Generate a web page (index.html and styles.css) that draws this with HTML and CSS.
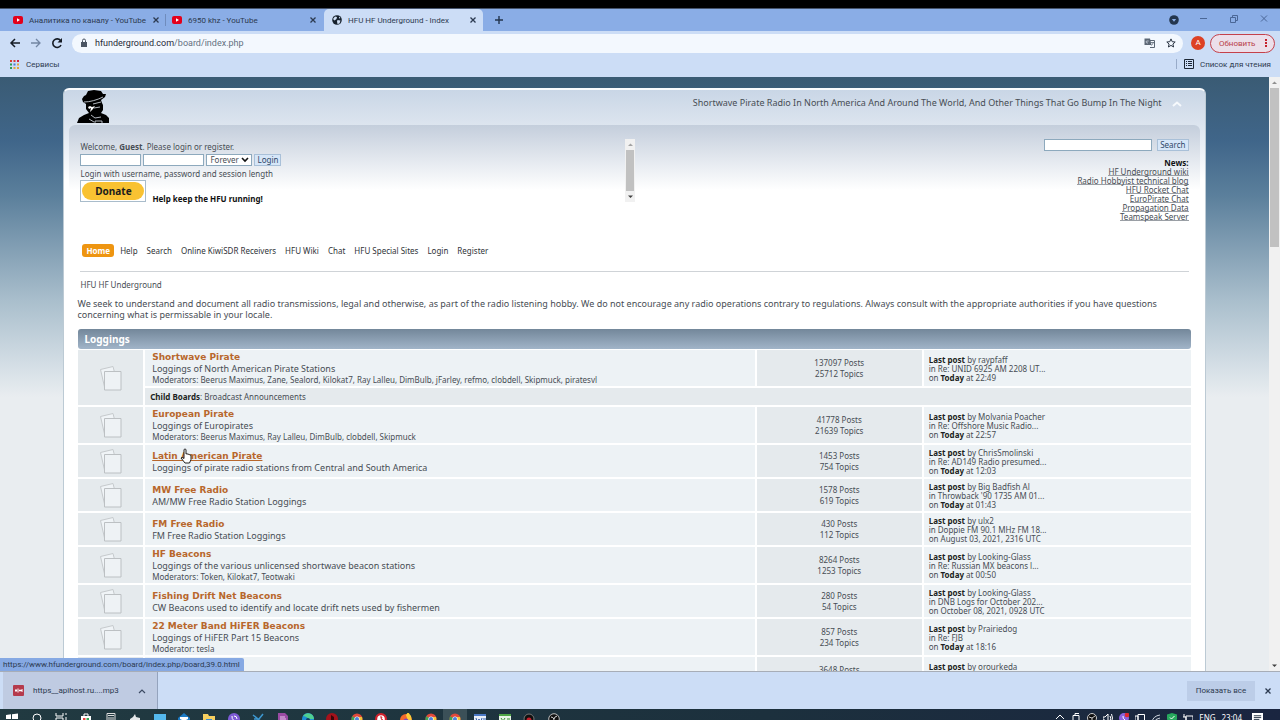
FILE: index.html
```html
<!DOCTYPE html>
<html lang="ru">
<head>
    <meta charset="UTF-8">
    <meta name="viewport" content="width=device-width, initial-scale=1.0">
    <title>HFU HF Underground - Index</title>
    <link rel="stylesheet" href="styles.css">
</head>
<body>

    <!-- shared icons -->
    <svg class="sprite" aria-hidden="true">
        <symbol id="pages" viewBox="0 0 24 26">
            <path d="M1.500 4.500L14 1.500L19 21L6 24Z" fill="#f0f4f7" stroke="#c6cacd"/>
            <path d="M5.500 6.500h16.500v18.500h-16.500z" fill="#eef2f5" stroke="#bcc0c3"/>
        </symbol>
        <symbol id="close" viewBox="0 0 8 8">
            <path d="M1.500 1.500l5 5M6.500 1.500l-5 5" stroke="currentColor" stroke-width="1.300" fill="none"/>
        </symbol>
        <symbol id="youtube" viewBox="0 0 10 8">
            <rect width="10" height="8" rx="2" fill="#e3001b"/>
            <path d="M4 2.300v3.400l3-1.700z" fill="#fff"/>
        </symbol>
        <symbol id="chrome" viewBox="0 0 12 12">
            <circle cx="6" cy="6" r="5.500" fill="#e0493a"/>
            <path d="M1.200 3.300A5.500 5.500 0 0 0 5.500 11.500L7.500 7.500L6 6z" fill="#43a355"/>
            <path d="M11 4A5.500 5.500 0 0 1 5.500 11.500L8 6L7 4z" fill="#f3c43b"/>
            <circle cx="6" cy="6" r="2.600" fill="#fff"/>
            <circle cx="6" cy="6" r="2" fill="#4c80dc"/>
        </symbol>
    </svg>

    <header class="browser">
        <div class="tabs">
            <div class="tab">
                <svg class="fav" viewBox="0 0 10 8"><use href="#youtube"/></svg>
                <span class="tab-title">Аналитика по каналу - YouTube</span>
                <button class="plain" aria-label="Закрыть"><svg class="x"><use href="#close"/></svg></button>
            </div>
            <div class="tab divided">
                <svg class="fav" viewBox="0 0 10 8"><use href="#youtube"/></svg>
                <span class="tab-title">6950 khz - YouTube</span>
                <button class="plain" aria-label="Закрыть"><svg class="x"><use href="#close"/></svg></button>
            </div>
            <div class="tab active">
                <svg class="fav" viewBox="0 0 10 10">
                    <circle cx="5" cy="5" r="4.800" fill="#15202c"/>
                    <path d="M1 4l2-2.500 2 .5-.5 2-2 1.500zM5.500 5l3 .5-1 3-2 .5-.5-2.500zM7 1.500l1.500 1.500-1.500.5z" fill="#cfdff5"/>
                </svg>
                <span class="tab-title">HFU HF Underground - Index</span>
                <button class="plain" aria-label="Закрыть"><svg class="x"><use href="#close"/></svg></button>
            </div>
            <button class="plain new-tab" aria-label="Новая вкладка">
                <svg width="10" height="10" viewBox="0 0 10 10"><path d="M5 1v8M1 5h8" stroke="#23344d" stroke-width="1.400"/></svg>
            </button>
            <div class="window-buttons">
                <button class="plain" aria-label="Вкладки"><svg width="10" height="10" viewBox="0 0 10 10"><circle cx="5" cy="5" r="4.800" fill="#24364e"/><path d="M2.800 4h4.400L5 6.800z" fill="#8aade5"/></svg></button>
                <button class="plain" aria-label="Свернуть"><svg width="10" height="10" viewBox="0 0 10 10"><path d="M1 3.500h7" stroke="#4a6797"/></svg></button>
                <button class="plain" aria-label="Развернуть"><svg width="10" height="10" viewBox="0 0 10 10"><path d="M1.500 2.500h5v5h-5zM3.500 2.500v-2h5v5h-2" stroke="#4a6797" fill="none"/></svg></button>
                <button class="plain" aria-label="Закрыть окно"><svg width="10" height="10" viewBox="0 0 10 10"><path d="M2 .5l6 6M8 .5l-6 6" stroke="#4a6797"/></svg></button>
            </div>
        </div>

        <div class="toolbar">
            <button class="plain" aria-label="Назад"><svg width="12" height="12" viewBox="0 0 12 12"><path d="M11 6H2M6 2L2 6l4 4" stroke="#151b24" stroke-width="1.500" fill="none"/></svg></button>
            <button class="plain" aria-label="Вперёд"><svg width="12" height="12" viewBox="0 0 12 12"><path d="M1 6h9M6 2l4 4-4 4" stroke="#7386a3" stroke-width="1.300" fill="none"/></svg></button>
            <button class="plain" aria-label="Обновить страницу"><svg width="12" height="12" viewBox="0 0 12 12"><path d="M10 8A4.300 4.300 0 1 1 9.500 3.500" stroke="#151b24" stroke-width="1.600" fill="none"/><path d="M11 1v4.500H6.500z" fill="#151b24"/></svg></button>
            <div class="address">
                <svg width="8" height="10" viewBox="0 0 8 10"><rect x="1" y="4" width="6" height="5" fill="#4b5563"/><path d="M2.500 4V2.500a1.500 1.500 0 0 1 3 0V4" stroke="#4b5563" fill="none"/></svg>
                <div class="url">hfunderground.com<span>/board/index.php</span></div>
                <svg width="11" height="10" viewBox="0 0 11 10"><path d="M.5.500h5.500l1.500 6.500h-7z" fill="#5b6674"/><path d="M5.500 2.500h5v7H6" stroke="#5b6674" fill="none"/><path d="M4.700 3H3a1 1 0 1 0 1 1.500" stroke="#dfe8f2" stroke-width=".7" fill="none"/><path d="M7 4.500h3M9.500 4.500L7.500 7.500" stroke="#5b6674" stroke-width=".8"/></svg>
                <svg width="10" height="10" viewBox="0 0 10 10"><path d="M5 .9l1.200 2.800 3 .3-2.300 2 .7 3L5 7.400 2.400 9l.7-3-2.300-2 3-.3z" stroke="#2c3644" fill="none"/></svg>
            </div>
            <span class="avatar">А</span>
            <button class="update">Обновить <span class="dots"><i></i><i></i><i></i></span></button>
        </div>

        <div class="bookmarks">
            <svg width="9" height="9" viewBox="0 0 9 9">
                <path d="M0 0h2v2H0zM3.500 0h2v2h-2z" fill="#d33b35"/><path d="M7 0h2v2H7z" fill="#c24"/>
                <path d="M0 3.500h2v2H0zM0 7h2v2H0z" fill="#2f9a57"/><path d="M3.500 3.500h2v2h-2z" fill="#4478d8"/>
                <path d="M7 3.500h2v2H7zM3.500 7h2v2h-2zM7 7h2v2H7z" fill="#dfa63c"/>
            </svg>
            <a href="#">Сервисы</a>
            <a href="#" class="reading-list">
                <svg width="10" height="10" viewBox="0 0 10 10"><path d="M.5.500h9v9h-9z" stroke="#1c2634" fill="none"/><path d="M2 2.500h1M4 2.500h4M2 4.500h1M4 4.500h4M2 6.500h1M4 6.500h4" stroke="#1c2634"/></svg>
                Список для чтения
            </a>
        </div>
    </header>

    <div class="viewport">
        <div class="page">
            <div class="wrapper">
                <div class="banner">
                    <svg class="logo" viewBox="0 0 33 33" aria-label="HFU">
                        <path d="M0 33L2 28L7 25L12 23L9 19L9 14L6 12L5 9L7 6L9 5L11 1L17 0L24 1L26 4L29 4L28 7L24 10L25 13L26 15L26 20L24 23L29 25L32 28L32 33Z" fill="#000"/>
                        <path d="M7 12c6 0 13-2 19-5M16 14l4-1M20 13l4-1M17 18l6-1M14 25l4 3M18 28l6-1M18 33v-2h7v2M12 29l5 3" stroke="#dfe6ef" stroke-width=".8" fill="none"/>
                        <path d="M11 17l1 2 2-1-1 4 3-3 2-3-3 1-2-1z" fill="#fff"/>
                    </svg>
                    <div class="slogan">Shortwave Pirate Radio In North America And Around The World, And Other Things That Go Bump In The Night</div>
                    <button class="plain" aria-label="Collapse"><svg width="12" height="8" viewBox="0 0 12 8"><path d="M2 6l4-3.500L10 6" stroke="#f6f9fc" stroke-width="2" fill="none"/></svg></button>
                </div>

                <div class="content">
                    <div class="upper">
                        <div class="left">
                            <div class="user">
                                <p>Welcome, <b>Guest</b>. Please <a href="#">login</a> or <a href="#">register</a>.</p>
                                <form class="login">
                                    <input type="text" aria-label="Username">
                                    <input type="password" aria-label="Password">
                                    <span class="length">
                                        <select aria-label="Session length"><option>Forever</option></select>
                                        <svg viewBox="0 0 8 6"><path d="M1 1l3 3 3-3" stroke="#111" stroke-width="1.600" fill="none"/></svg>
                                    </span>
                                    <button type="button" class="submit">Login</button>
                                </form>
                                <p>Login with username, password and session length</p>
                                <div class="donate">
                                    <button type="button"><span>Donate</span></button>
                                    <b>Help keep the HFU running!</b>
                                </div>
                            </div>
                            <div class="scrollbar small">
                                <svg viewBox="0 0 10 10"><path d="M3 6.500h5L5.500 4z" fill="#a3a3a3"/></svg>
                                <div class="thumb"></div>
                                <svg viewBox="0 0 10 10"><path d="M3 4h5L5.500 6.500z" fill="#404040"/></svg>
                            </div>
                        </div>
                        <div class="right">
                            <form class="search">
                                <input type="text" aria-label="Search">
                                <button type="button" class="submit">Search</button>
                            </form>
                            <div class="news">
                                <b>News:</b>
                                <a href="#">HF Underground wiki</a>
                                <a href="#">Radio Hobbyist technical blog</a>
                                <a href="#">HFU Rocket Chat</a>
                                <a href="#">EuroPirate Chat</a>
                                <a href="#">Propagation Data</a>
                                <a href="#">Teamspeak Server</a>
                            </div>
                        </div>
                    </div>

                    <nav class="menu">
                        <a href="#" class="current">Home</a>
                        <a href="#">Help</a>
                        <a href="#">Search</a>
                        <a href="#">Online KiwiSDR Receivers</a>
                        <a href="#">HFU Wiki</a>
                        <a href="#">Chat</a>
                        <a href="#">HFU Special Sites</a>
                        <a href="#">Login</a>
                        <a href="#">Register</a>
                    </nav>

                    <div class="crumbs"><a href="#">HFU HF Underground</a></div>

                    <p class="intro">We seek to understand and document all radio transmissions, legal and otherwise, as part of the radio listening hobby. We do not encourage any radio operations contrary to regulations. Always consult with the appropriate authorities if you have questions concerning what is permissable in your locale.</p>

                    <h3 class="category">Loggings</h3>
                    <table class="boards">
                        <colgroup><col class="c-icon"><col class="c-info"><col class="c-stats"><col class="c-last"></colgroup>
                        <tbody>
                            <tr class="tall">
                                <td class="icon" rowspan="2"><svg><use href="#pages"/></svg></td>
                                <td class="info"><a href="#">Shortwave Pirate</a><p>Loggings of North American Pirate Stations</p><p class="mods">Moderators: Beerus Maximus, Zane, Sealord, Kilokat7, Ray Lalleu, DimBulb, jFarley, refmo, clobdell, Skipmuck, piratesvl</p></td>
                                <td class="stats">137097 Posts<br>25712 Topics</td>
                                <td class="last"><b>Last post</b> by raypfaff<br>in Re: UNID 6925 AM 2208 UT...<br>on <b>Today</b> at 22:49</td>
                            </tr>
                            <tr>
                                <td class="children" colspan="3"><b>Child Boards</b>: <a href="#">Broadcast Announcements</a></td>
                            </tr>
                            <tr class="tall">
                                <td class="icon"><svg><use href="#pages"/></svg></td>
                                <td class="info"><a href="#">European Pirate</a><p>Loggings of Europirates</p><p class="mods">Moderators: Beerus Maximus, Ray Lalleu, DimBulb, clobdell, Skipmuck</p></td>
                                <td class="stats">41778 Posts<br>21639 Topics</td>
                                <td class="last"><b>Last post</b> by Molvania Poacher<br>in Re: Offshore Music Radio...<br>on <b>Today</b> at 22:57</td>
                            </tr>
                            <tr>
                                <td class="icon"><svg><use href="#pages"/></svg></td>
                                <td class="info">
                                    <a href="#" class="hovered">Latin American Pirate
                                        <svg class="cursor" viewBox="0 0 12 16"><path d="M4 9V2q0-1 1-1t1 1v4q1-.8 2 .3 1-.5 1.500.5 1.500-.3 1.500 1.200v3.500L9.500 15H5L1 10q.5-1.500 3 .5z" fill="#fff" stroke="#222"/></svg>
                                    </a>
                                    <p>Loggings of pirate radio stations from Central and South America</p>
                                </td>
                                <td class="stats">1453 Posts<br>754 Topics</td>
                                <td class="last"><b>Last post</b> by ChrisSmolinski<br>in Re: AD149 Radio presumed...<br>on <b>Today</b> at 12:03</td>
                            </tr>
                            <tr>
                                <td class="icon"><svg><use href="#pages"/></svg></td>
                                <td class="info"><a href="#">MW Free Radio</a><p>AM/MW Free Radio Station Loggings</p></td>
                                <td class="stats">1578 Posts<br>619 Topics</td>
                                <td class="last"><b>Last post</b> by Big Badfish Al<br>in Throwback '90 1735 AM 01...<br>on <b>Today</b> at 01:43</td>
                            </tr>
                            <tr>
                                <td class="icon"><svg><use href="#pages"/></svg></td>
                                <td class="info"><a href="#">FM Free Radio</a><p>FM Free Radio Station Loggings</p></td>
                                <td class="stats">430 Posts<br>112 Topics</td>
                                <td class="last"><b>Last post</b> by ulx2<br>in Doppie FM 90.1 MHz FM 18...<br>on August 03, 2021, 2316 UTC</td>
                            </tr>
                            <tr class="tall">
                                <td class="icon"><svg><use href="#pages"/></svg></td>
                                <td class="info"><a href="#">HF Beacons</a><p>Loggings of the various unlicensed shortwave beacon stations</p><p class="mods">Moderators: Token, Kilokat7, Teotwaki</p></td>
                                <td class="stats">8264 Posts<br>1253 Topics</td>
                                <td class="last"><b>Last post</b> by Looking-Glass<br>in Re: Russian MX beacons l...<br>on <b>Today</b> at 00:50</td>
                            </tr>
                            <tr>
                                <td class="icon"><svg><use href="#pages"/></svg></td>
                                <td class="info"><a href="#">Fishing Drift Net Beacons</a><p>CW Beacons used to identify and locate drift nets used by fishermen</p></td>
                                <td class="stats">280 Posts<br>54 Topics</td>
                                <td class="last"><b>Last post</b> by Looking-Glass<br>in DNB Logs for October 202...<br>on October 08, 2021, 0928 UTC</td>
                            </tr>
                            <tr class="tall">
                                <td class="icon"><svg><use href="#pages"/></svg></td>
                                <td class="info"><a href="#">22 Meter Band HiFER Beacons</a><p>Loggings of HiFER Part 15 Beacons</p><p class="mods">Moderator: tesla</p></td>
                                <td class="stats">857 Posts<br>234 Topics</td>
                                <td class="last"><b>Last post</b> by Prairiedog<br>in Re: FJB<br>on <b>Today</b> at 18:16</td>
                            </tr>
                            <tr class="tall">
                                <td class="icon"></td>
                                <td class="info"></td>
                                <td class="stats">3648 Posts<br>&nbsp;</td>
                                <td class="last"><b>Last post</b> by orourkeda<br>&nbsp;<br>&nbsp;</td>
                            </tr>
                        </tbody>
                    </table>
                </div>
            </div>
        </div>
        <div class="scrollbar">
            <svg viewBox="0 0 10 10"><path d="M3 6.500h5L5.500 4z" fill="#909090"/></svg>
            <div class="thumb"></div>
            <svg viewBox="0 0 10 10"><path d="M3 4h5L5.500 6.500z" fill="#404040"/></svg>
        </div>
        <div class="status">https://www.hfunderground.com/board/index.php/board,39.0.html</div>
    </div>

    <div class="downloads">
        <button class="file">
            <svg width="11" height="11" viewBox="0 0 11 11"><rect width="11" height="11" rx="1" fill="#b53a4c"/><path d="M2 5.500h2M3 4v3M5 3.500v4M7 4.500v2M9 4v3M6 5.500h3" stroke="#fff"/></svg>
            <span>https__apihost.ru....mp3</span>
            <svg width="8" height="8" viewBox="0 0 8 8"><path d="M1 6l3-3 3 3" stroke="#3c4a63" stroke-width="1.200" fill="none"/></svg>
        </button>
        <button class="show-all">Показать все</button>
        <button class="plain" aria-label="Закрыть"><svg class="x"><use href="#close"/></svg></button>
    </div>

    <footer class="taskbar">
        <div class="apps">
            <svg viewBox="0 0 12 12"><path d="M0 2l5-.7V6H0zM6 1.200L12 .4V6H6zM0 7h5v5H0zM6 7h6v5H6z" fill="#fff"/></svg>
            <svg viewBox="0 0 12 12"><circle cx="6" cy="5" r="4" stroke="#fff" fill="none"/></svg>
            <svg viewBox="0 0 12 12"><path d="M1 0v3h7V0M1 12V5h7v7M11 0v2M11 4v8" stroke="#fff" fill="none"/></svg>
            <svg viewBox="0 0 12 12"><path d="M4 3V1h4v2" stroke="#fff" fill="none"/><path d="M1 3h10v9H1z" fill="#fff"/><path d="M3 5h2.500v2.500H3z" fill="#e44"/><path d="M6.500 5H9v2.500H6.500z" fill="#3a5"/></svg>
            <svg viewBox="0 0 12 12"><path d="M2 .5h8V12H2z" stroke="#ddd" fill="none"/><path d="M3 2.500h6M3 5h6M3 7h6" stroke="#ddd"/></svg>
            <svg viewBox="0 0 12 12"><path d="M1 12V6l3-2 2-3 1 3 4 1v7z" fill="#e6e8ea"/></svg>
            <svg viewBox="0 0 12 12"><path d="M0 1l12 0v11H0z" fill="#54b9ee"/></svg>
            <svg viewBox="0 0 12 12"><path d="M0 5l6-5 6 5v7H0z" fill="#1b7ac4"/><path d="M2 4h8v2L6 8 2 6z" fill="#fff"/></svg>
            <svg viewBox="0 0 12 12"><path d="M0 1h5l1 2h6v9H0z" fill="#f5cf60"/><path d="M3 6h6v2H3z" fill="#3b8bd0"/></svg>
            <svg viewBox="0 0 12 12"><circle cx="6" cy="6" r="6" fill="#7d5bd6"/><path d="M4 3q-1 2 3 6l1.500-1.500M6 3q3 0 3 3" stroke="#fff" fill="none"/></svg>
            <svg viewBox="0 0 12 12"><path d="M1 2l10 8M11 1L3 11M2 6h5" stroke="#3d97cf" stroke-width="1.500"/></svg>
            <svg viewBox="0 0 12 12"><path d="M1 0h7l3 3v9H1z" fill="#9b4ba4"/><path d="M3 4h5M3 6h6" stroke="#e8c8ee"/></svg>
            <svg viewBox="0 0 12 12"><circle cx="6" cy="6" r="6" fill="#1d8fd6"/><path d="M1 3a6 6 0 0 1 11 3H6q0-2-5-3z" fill="#50cf8f"/><circle cx="6" cy="7" r="2" fill="#123d66"/></svg>
            <svg viewBox="0 0 12 12"><circle cx="6" cy="6" r="6" fill="#a5121b"/><path d="M5 2l3 2v8H5z" fill="#3c060a"/></svg>
            <svg viewBox="0 0 12 12"><use href="#chrome"/></svg>
            <svg viewBox="0 0 12 12"><circle cx="6" cy="6" r="6" fill="#d2232e"/><circle cx="6" cy="6" r="3.800" fill="#fff"/><path d="M5 4h2l-1 2 2 1-3 2" stroke="#d2232e" fill="none"/></svg>
            <svg viewBox="0 0 12 12"><circle cx="6" cy="7" r="6" fill="#f3682c"/><path d="M6 2L8-1l3 4 1 6-4-1z" fill="#fbcb3a"/><circle cx="6" cy="8" r="2.500" fill="#7b46c2"/></svg>
            <svg viewBox="0 0 12 12"><use href="#chrome"/></svg>
            <svg class="running" viewBox="0 0 12 12"><use href="#chrome"/></svg>
            <svg viewBox="0 0 12 12"><path d="M0 1h12v11H0z" fill="#e8eef8"/><path d="M0 1h12v2H0z" fill="#4a78c4"/><path d="M2 5l1.500 5L5 6l1.500 4L8 5M9 6h3" stroke="#2f5cab" fill="none"/></svg>
            <svg viewBox="0 0 12 12"><path d="M0 1h12v11H0z" fill="#e8f4e6"/><path d="M0 1h12v2H0z" fill="#4da545"/><path d="M2 5l4 6M6 5l-4 6M8 6h3" stroke="#35902e"/></svg>
            <svg viewBox="0 0 12 12"><circle cx="6" cy="6" r="5" fill="#101010" stroke="#777"/><circle cx="6" cy="7" r="2.500" fill="#c51d2a"/></svg>
            <svg viewBox="0 0 12 12"><circle cx="6" cy="6" r="5.300" fill="#111" stroke="#bbb"/><path d="M3 4q2 0 3 2 0-2 3-3M6 6q0 2-2 4" stroke="#ddd" fill="none"/></svg>
        </div>
        <div class="tray">
            <svg viewBox="0 0 10 10"><path d="M1 6l4-4 4 4" stroke="#fff" fill="none"/></svg>
            <svg viewBox="0 0 10 10"><path d="M2 2.500h6V10H2zM4 2V.500h4" stroke="#fff" fill="none"/></svg>
            <svg viewBox="0 0 10 10"><circle cx="5" cy="5" r="4.500" fill="#111" stroke="#ccc"/><path d="M2 4l3 1 3-2M5 5v4" stroke="#ccc"/></svg>
            <svg viewBox="0 0 10 10"><path d="M0 4h2l3-3v9L2 7H0zM7 3q1.500 2 0 5M8.500 1q2 4 0 8" stroke="#fff" fill="none"/></svg>
            <svg viewBox="0 0 10 10"><circle cx="5" cy="5" r="5" fill="#8a63dd"/><path d="M4 3q-1 2 3 5" stroke="#fff" fill="none"/><circle cx="8" cy="2" r="2.300" fill="#e0282e"/></svg>
            <svg viewBox="0 0 10 10"><path d="M3 1.500h6.500V9H3zM0 3h3v7H0z" stroke="#fff" fill="none"/></svg>
            <svg viewBox="0 0 10 10"><path d="M1 9Q2 3 9 2M3 9q1-3 6-4M6 9q1-1 3-2" stroke="#cfd6de" fill="none"/></svg>
            <svg viewBox="0 0 10 10"><path d="M5 0l5 1.500v5L5 10 0 6.500v-5z" fill="#27a85d"/><path d="M3 4.500l1.500 1.500L7.500 3" stroke="#fff" fill="none"/></svg>
            <svg viewBox="0 0 10 10"><path d="M1 1v3M3 3h7v5H3zM0 4h3v5" stroke="#fff" fill="none"/></svg>
            <span class="lang">ENG</span>
            <span class="clock">23:04</span>
            <svg class="notes" viewBox="0 0 12 12"><path d="M0 0h12v12H0z" fill="#fff"/><path d="M2 3h8M2 5h8M2 7h6" stroke="#1b2b3c"/></svg>
        </div>
    </footer>

</body>
</html>
```
FILE: styles.css
```css
* {
    box-sizing: border-box;
}
body {
    margin: 0;
    height: 100vh;
    display: flex;
    flex-direction: column;
    overflow: hidden;
    background: #000;
    font-family: "Noto Sans", "DejaVu Sans", sans-serif;
    font-size: 8px;
    color: #474d54;
}
p, h3 {
    margin: 0;
}
a {
    color: inherit;
    text-decoration: none;
}
button, input, select {
    font: inherit;
    color: inherit;
    margin: 0;
    padding: 0;
}
svg {
    display: block;
    flex: none;
}
.sprite {
    position: absolute;
    width: 0;
    height: 0;
}
.plain {
    display: flex;
    border: none;
    background: none;
}

/* browser window */
.browser, .downloads, .status {
    font-family: Roboto, "Noto Sans", sans-serif;
    color: #2c3a50;
}
.browser {
    margin-top: 8px;
    border-top: 1px solid #45536b;
    background: #ccddf6;
    flex: none;
}
.tabs {
    display: flex;
    align-items: center;
    height: 22px;
    background: #8aade6;
}
.tab {
    display: flex;
    align-items: center;
    gap: 6px;
    width: 159px;
    height: 100%;
    padding: 0 7px 0 13px;
}
.tab:first-child {
    width: 165px;
}
.tab.divided {
    padding-left: 7px;
    background: linear-gradient(#6f8cbd, #6f8cbd) no-repeat 0 5px / 1px 12px;
}
.tab.active {
    padding: 0 6px 0 8px;
    border-radius: 5px 5px 0 0;
    background: #ccddf6;
}
.tab-title {
    flex: 1;
    white-space: nowrap;
}
.fav {
    width: 10px;
    height: 10px;
}
.x {
    width: 8px;
    height: 8px;
}
.new-tab {
    margin-left: 11px;
}
.window-buttons {
    display: flex;
    gap: 20px;
    margin-left: auto;
    margin-right: 11px;
}
.toolbar {
    display: flex;
    align-items: center;
    gap: 9px;
    height: 24px;
    padding: 0 5px 0 9px;
}
.address {
    display: flex;
    align-items: center;
    flex: 1;
    gap: 11px;
    height: 19px;
    padding: 0 7px 0 8px;
    border-radius: 10px;
    background: #f3f8fe;
}
.url {
    flex: 1;
    margin-left: -4px;
    font-size: 9px;
    color: #1f2937;
}
.url span {
    color: #64707e;
}
.avatar {
    width: 14px;
    height: 14px;
    border-radius: 7px;
    background: #dd4124;
    color: #fff;
    text-align: center;
    line-height: 14px;
    margin-left: -1px;
}
.update {
    display: flex;
    align-items: center;
    justify-content: space-between;
    width: 65px;
    height: 19px;
    padding: 0 7px 0 8px;
    margin-left: -4px;
    border: 1px solid #c5414b;
    border-radius: 10px;
    background: #ecdfea;
    color: #b93d48;
}
.dots {
    display: grid;
    gap: 1px;
}
.dots i {
    width: 2px;
    height: 2px;
    background: #c5222e;
}
.bookmarks {
    display: flex;
    align-items: center;
    gap: 7px;
    height: 22px;
    padding: 0 9px 4px 10px;
}
.reading-list {
    display: flex;
    align-items: center;
    gap: 6px;
    margin-left: auto;
    padding-left: 7px;
    border-left: 1px solid #98abc9;
}

/* forum page */
.viewport {
    position: relative;
    display: flex;
    flex: 1;
    min-height: 0;
    overflow: hidden;
    background: #e9edf0;
}
.page {
    flex: 1;
    padding-top: 11px;
    background: linear-gradient(#3a5b74 0, #40668a 65px, #5c809c 120px, #a9becc 223px, #d5dfe6 290px, #e9edf0 320px);
}
.wrapper {
    width: 90%;
    margin: 0 auto;
    border-top: 2px solid #fbfcfe;
    border-left: 1px solid #bccad4;
    border-right: 1px solid #bccad4;
    border-radius: 6px 6px 0 0;
    padding: 0 5px;
    background: linear-gradient(#c9d6e6, #dde5ef 36px, #fff 90px);
}
.banner {
    display: flex;
    height: 35px;
    padding: 0 17px 0 8px;
}
.logo {
    width: 33px;
    height: 33px;
}
.slogan {
    flex: 1;
    padding: 6px 9px 0 0;
    font-size: 9px;
    line-height: 14px;
    text-align: right;
}
.banner .plain {
    margin-top: 10px;
    height: 8px;
}
.content {
    padding: 14px 11px 0;
    border-radius: 6px 6px 0 0;
    background: linear-gradient(#c4cedc, #fff 65px);
}
.upper {
    display: grid;
    grid-template-columns: 1fr 1fr;
    height: 105px;
}
.left {
    display: flex;
    justify-content: space-between;
    align-items: flex-start;
}
.user {
    padding-top: 1px;
}
.user p {
    line-height: 13px;
}
.login, .search {
    display: flex;
    gap: 2px;
}
.login {
    margin: 1px 0;
}
.login input {
    width: 61px;
}
input, select {
    height: 12px;
    border: 1px solid #8da9bd;
    background: #fff;
}
.length {
    position: relative;
    display: block;
    height: 12px;
}
.length svg {
    position: absolute;
    right: 3px;
    top: 3px;
    width: 8px;
    height: 6px;
}
select {
    display: block;
    width: 46px;
    padding-left: 3px;
    appearance: none;
    line-height: 10px;
}
.submit {
    height: 12px;
    padding: 0 2px;
    border: 1px solid #a9c0d8;
    background: #d6e6f8;
    color: #2f4868;
    line-height: 10px;
}
.donate {
    display: flex;
    align-items: flex-end;
    gap: 6px;
}
.donate button {
    width: 66px;
    height: 22px;
    padding: 1px;
    border: 1px solid #a9bccb;
    background: #fff;
}
.donate span {
    display: block;
    border-radius: 9px;
    background: #f9c232;
    color: #1c1c1c;
    font: bold 10px/18px "Noto Sans", sans-serif;
}
.donate b {
    color: #111;
    line-height: 7px;
}
.scrollbar {
    display: flex;
    flex-direction: column;
    width: 11px;
    background: #f1f1f1;
}
.scrollbar svg {
    width: 10px;
    height: 11px;
}
.scrollbar .thumb {
    height: 159px;
    margin: 0 1px auto;
    background: #c1c1c1;
}
.scrollbar.small {
    width: 10px;
    height: 63px;
}
.scrollbar.small .thumb {
    height: 41px;
}
.right {
    display: flex;
    flex-direction: column;
    align-items: flex-end;
    gap: 7px;
}
.search {
    gap: 5px;
}
.search input {
    width: 108px;
}
.news {
    display: flex;
    flex-direction: column;
    align-items: flex-end;
    line-height: 9px;
}
.news b {
    color: #111;
}
.news a {
    height: 9px;
    border-bottom: 1px solid #9a9fa5;
}
.menu {
    display: flex;
    gap: 9px;
    padding: 0 0 14px 2px;
    border-bottom: 1px solid #cfd3d7;
    line-height: 13px;
    color: #2f3338;
}
.menu .current {
    margin-right: -3px;
    padding: 0 4px;
    border-radius: 3px;
    background: #ee9511;
    color: #fff;
    font-weight: bold;
}
.crumbs {
    padding-top: 6px;
    line-height: 14px;
}
.intro {
    margin: 6px -3px 9px;
    font-size: 9px;
    line-height: 11px;
}
.category {
    margin: 0 -2px 1px;
    padding-left: 6px;
    border-radius: 3px;
    background: linear-gradient(#73879a, #a1b4c8);
    color: #fff;
    font-size: 10px;
    line-height: 20px;
}

/* board list */
.boards {
    width: calc(100% + 4px);
    margin: 0 -2px;
    border-collapse: separate;
    border-spacing: 0;
    table-layout: fixed;
}
.c-icon {
    width: 6%;
}
.c-stats {
    width: 15%;
}
.c-last {
    width: 24%;
}
td {
    height: 34px;
    padding: 0 7px;
    border-right: 2px solid #fff;
    border-bottom: 2px solid #fff;
    background: #edf2f5;
    line-height: 9px;
}
.tall td {
    height: 38px;
}
td.icon {
    background: #e5eaed;
}
.icon svg {
    width: 24px;
    height: 26px;
    margin: 0 auto;
}
.info a {
    position: relative;
    color: #b8672c;
    font-family: "DejaVu Sans", sans-serif;
    font-size: 9px;
    font-weight: bold;
    line-height: 12px;
}
.info p {
    font-size: 9px;
    line-height: 11px;
}
.info .mods {
    font-size: 8px;
}
.info .hovered {
    text-decoration: underline;
}
.cursor {
    position: absolute;
    left: 28px;
    top: -3px;
    width: 12px;
    height: 16px;
}
td.stats {
    background: #e5eaed;
    text-align: center;
    line-height: 11px;
}
td.last {
    padding-left: 5px;
    border-right: none;
}
.last b, .children b {
    color: #1c1f22;
}
td.children {
    height: 19px;
    padding: 0 5px;
    border-right: none;
    background: #e5eaed;
}
.status {
    position: absolute;
    left: 0;
    bottom: 0;
    height: 13px;
    padding: 0 4px 0 3px;
    border-radius: 0 2px 0 0;
    background: #86a9e3;
    line-height: 13px;
}

.downloads {
    display: flex;
    align-items: center;
    flex: none;
    height: 38px;
    padding-right: 8px;
    border-top: 1px solid #a7adb7;
    background: #ccddf6;
}
.file {
    display: flex;
    align-items: center;
    gap: 9px;
    width: 155px;
    height: 100%;
    margin-left: 3px;
    padding: 0 11px 0 10px;
    border: none;
    border-right: 1px solid #94a3bd;
    background: #bfcbe2;
    text-align: left;
}
.file span {
    flex: 1;
}
.show-all {
    width: 68px;
    height: 20px;
    margin: 0 9px 0 auto;
    border: none;
    background: #bccde8;
}

.taskbar {
    display: flex;
    justify-content: space-between;
    flex: none;
    height: 11px;
    padding: 4px 17px 0 6px;
    overflow: hidden;
    background: linear-gradient(90deg, #213a41, #1c303d 60%, #1a2540);
    color: #fff;
}
.apps {
    display: flex;
    justify-content: space-between;
    width: 554px;
}
.apps svg {
    width: 12px;
    height: 12px;
}
.apps .running {
    background: #3b5058;
    box-shadow: 0 0 0 6px #3b5058;
}
.tray {
    display: flex;
    gap: 6px;
}
.tray svg {
    width: 10px;
    height: 10px;
}
.tray .notes {
    width: 11px;
    height: 11px;
    margin-left: 4px;
}
.lang, .clock {
    font-size: 8px;
    line-height: 9px;
}
```
